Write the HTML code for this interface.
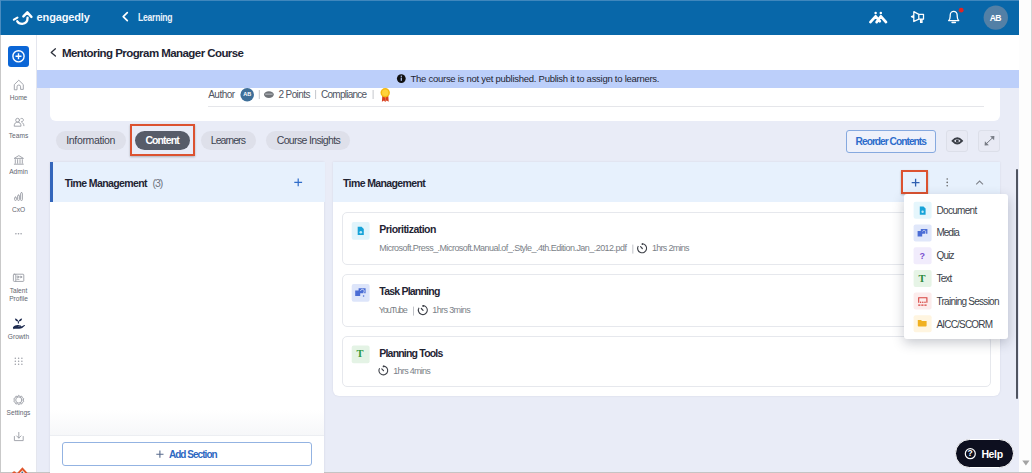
<!DOCTYPE html><html><head><meta charset="utf-8"><style>
*{margin:0;padding:0;box-sizing:border-box}
html,body{width:1032px;height:473px;overflow:hidden;background:#fff;font-family:"Liberation Sans",sans-serif}
.a{position:absolute}
.t{position:absolute;white-space:nowrap}
svg{position:absolute;overflow:visible}
</style></head><body><div class="a" style="left:37px;top:35px;width:982px;height:438px;background:#e9ecf7"></div>
<div class="a" style="left:0px;top:0px;width:1019px;height:35px;background:#0867a9"></div>
<div class="a" style="left:0px;top:0px;width:1019px;height:1px;background:#3f87bd"></div>
<div class="a" style="left:0px;top:35px;width:37px;height:438px;background:#fff;border-right:1px solid #e4e6ee"></div>
<div class="a" style="left:1019px;top:0px;width:13px;height:473px;background:#fdfdfd"></div>
<div class="a" style="left:1031px;top:0px;width:1px;height:473px;background:#d6d6d6"></div>
<div class="a" style="left:0px;top:35px;width:1px;height:438px;background:#c9c9c9"></div>
<div class="a" style="left:0px;top:0px;width:1px;height:35px;background:#4a8cc0"></div>
<div class="a" style="left:0px;top:472px;width:1032px;height:1px;background:#c4c4c4"></div>
<div class="a" style="left:37px;top:35px;width:982px;height:35px;background:#fff"></div>
<div class="a" style="left:50px;top:80px;width:950px;height:41px;background:#fff;border-radius:0 0 6px 6px"></div>
<div class="a" style="left:208px;top:106px;width:776px;height:1px;background:#e5e6ea"></div>
<div class="a" style="left:37px;top:70px;width:982px;height:17.5px;background:#bccffa"></div>
<svg width="1032" height="40" style="left:0;top:0" viewBox="0 0 1032 40">
<g fill="none" stroke="#fff" stroke-linecap="round" stroke-linejoin="round">
<path d="M13.9 19.6 L17.4 17.6" stroke-width="2.2"/>
<path d="M17.2 21.2 Q18.6 23.8 22.2 23.8 Q27.6 23.5 27.6 17.6" stroke-width="2.3"/>
<path d="M23.4 16.4 L27.3 12.4 L31.4 16.8" stroke-width="2.5"/>
<path d="M127.3 12.6 L123.2 16.6 L127.3 20.6" stroke-width="1.7"/>
<path d="M870.4 22.1 L875.6 16.3 L879.8 21.2 M876.6 22.1 L880.9 16.3 L886 22.1" stroke-width="2.7"/>
<path d="M913.8 11.7 V21.5 L918.8 19.2 V14.3 Z M918.8 14.3 H923.5 V19.2 H918.8 M920.6 19.2 V22.4 H922 V19.2 M913.8 15.6 L911.5 16.6 L913.8 17.6" stroke-width="1.3"/>
<path d="M948.6 20.6 h10.2 c-1.3-1.3 -1.6-2.6 -1.6-4.4 v-1 c0-2.2-1.6-3.9-3.5-3.9 s-3.5 1.7-3.5 3.9 v1 c0 1.8-0.3 3.1-1.6 4.4 z M952 22.5 h3.4" stroke-width="1.3"/>
</g>
<circle cx="875.6" cy="13.1" r="1.25" fill="#fff"/>
<circle cx="880.8" cy="13.1" r="1.25" fill="#fff"/>
<circle cx="961.2" cy="10.2" r="2.4" fill="#e02424"/>
<circle cx="995.8" cy="17.6" r="12.2" fill="#5380a6"/>
</svg>
<div class="t" style="left:36.60px;top:9.59px;font-size:11px;line-height:14px;letter-spacing:-0.138px;color:#f4f9ff;font-weight:700;">engagedly</div>
<div class="t" style="left:138px;top:10.56px;font-size:10.5px;line-height:13px;font-weight:700;color:#e8f1fb;letter-spacing:-0.3px;transform:scaleX(0.817);transform-origin:0 0">Learning</div>
<div class="t" style="left:989.80px;top:12.62px;font-size:8.6px;line-height:11px;letter-spacing:-0.822px;color:#fff;font-weight:700;">AB</div>
<svg width="20" height="20" style="left:45px;top:43px" viewBox="45 43 20 20"><path d="M55.4 48.8 L51.2 52.4 L55.4 56" fill="none" stroke="#2a2f3a" stroke-width="1.3" stroke-linecap="round" stroke-linejoin="round"/></svg>
<div class="t" style="left:62.00px;top:46.42px;font-size:11.5px;line-height:14px;letter-spacing:-0.560px;color:#1e2433;font-weight:700;">Mentoring Program Manager Course</div>
<svg width="12" height="12" style="left:396px;top:73px" viewBox="396 73 12 12"><circle cx="401.3" cy="78.6" r="4.4" fill="#111"/><rect x="400.7" y="77.6" width="1.2" height="3.2" fill="#bccffa"/><circle cx="401.3" cy="76.3" r="0.7" fill="#bccffa"/></svg>
<div class="t" style="left:410.50px;top:72.71px;font-size:9.5px;line-height:12px;letter-spacing:-0.264px;color:#1f2633;">The course is not yet published. Publish it to assign to learners.</div>
<div class="t" style="left:208.20px;top:88.83px;font-size:10px;line-height:12px;letter-spacing:-0.493px;color:#4f5461;">Author</div>
<svg width="200" height="20" style="left:236px;top:86px" viewBox="236 86 200 20">
<circle cx="247.2" cy="94.7" r="6.8" fill="#3e6f99"/>
<rect x="258.8" y="90" width="1" height="9" fill="#c5c7cc"/>
<ellipse cx="268.9" cy="94.6" rx="4.9" ry="3.3" fill="#707479"/>
<rect x="265.2" y="93.6" width="7.4" height="1.1" fill="#b5b8bd"/>
<rect x="315.1" y="90" width="1" height="9" fill="#c5c7cc"/>
<rect x="372.6" y="90" width="1" height="9" fill="#c5c7cc"/>
<path d="M382.3 95.5 L381.9 101.8 L384 100.4 L385.2 102 L385.2 96.5 Z M388.3 95.5 L388.7 101.8 L386.6 100.4 L385.4 102 L385.4 96.5 Z" fill="#d8401f"/>
<circle cx="385.2" cy="92.8" r="4.7" fill="#f5b912"/>
<circle cx="385.2" cy="92.8" r="3.2" fill="#ffd33b"/>
</svg>
<div class="t" style="left:243.20px;top:91.39px;font-size:5.5px;line-height:7px;letter-spacing:0.056px;color:#fff;font-weight:700;">AB</div>
<div class="t" style="left:278.40px;top:88.83px;font-size:10px;line-height:12px;letter-spacing:-0.591px;color:#4f5461;">2 Points</div>
<div class="t" style="left:321.10px;top:88.83px;font-size:10px;line-height:12px;letter-spacing:-0.756px;color:#4f5461;">Compliance</div>
<div class="a" style="left:56px;top:131px;width:69.5px;height:19.2px;background:#dee0ea;border-radius:10px"></div>
<div class="a" style="left:200.5px;top:131px;width:55.5px;height:19.2px;background:#dee0ea;border-radius:10px"></div>
<div class="a" style="left:265.7px;top:131px;width:84.6px;height:19.2px;background:#dee0ea;border-radius:10px"></div>
<div class="a" style="left:129.7px;top:124.3px;width:65.6px;height:31.4px;border:2px solid #dc5230;box-shadow:0 1px 2px rgba(0,0,0,0.25)"></div>
<div class="a" style="left:134.8px;top:131px;width:55.5px;height:19.2px;background:#575c69;border-radius:10px"></div>
<div class="t" style="left:66.30px;top:133.86px;font-size:10.5px;line-height:13px;letter-spacing:-0.353px;color:#3d4350;">Information</div>
<div class="t" style="left:145.40px;top:133.86px;font-size:10.5px;line-height:13px;letter-spacing:-0.893px;color:#fff;font-weight:700;">Content</div>
<div class="t" style="left:210.70px;top:133.86px;font-size:10.5px;line-height:13px;letter-spacing:-0.878px;color:#3d4350;">Learners</div>
<div class="t" style="left:276.70px;top:133.86px;font-size:10.5px;line-height:13px;letter-spacing:-0.640px;color:#3d4350;">Course Insights</div>
<div class="a" style="left:846.3px;top:129.6px;width:90.1px;height:23px;background:#eef1fb;border:1px solid #86a9df;border-radius:3px"></div>
<div class="t" style="left:855.60px;top:135.17px;font-size:10.2px;line-height:13px;letter-spacing:-0.983px;color:#2d6ccb;font-weight:700;">Reorder Contents</div>
<div class="a" style="left:945.6px;top:129.9px;width:22.6px;height:22.4px;background:#e8eaf4;border:1px solid #dcdfe9;border-radius:3px"></div>
<div class="a" style="left:978px;top:129.9px;width:22.4px;height:22.4px;background:#e8eaf4;border:1px solid #dcdfe9;border-radius:3px"></div>
<svg width="60" height="30" style="left:945px;top:128px" viewBox="945 128 60 30">
<path d="M952.6 140.9 Q957.3 135.6 962 140.9 Q957.3 146.2 952.6 140.9 Z" fill="none" stroke="#3a3e46" stroke-width="1.9"/>
<circle cx="957.3" cy="140.9" r="1.5" fill="#3a3e46"/>
<g stroke="#777b84" stroke-width="1" fill="none" stroke-linecap="round">
<path d="M985.6 144.4 L993.4 137"/></g><g fill="#777b84"><path d="M994.4 135.9 L994.1 140.2 L990.1 136.2 Z M984.6 145.5 L984.9 141.2 L988.9 145.2 Z"/>
</g>
</svg>
<div class="a" style="left:50px;top:162px;width:273.5px;height:311px;background:#fff;box-shadow:0 0 2px rgba(60,60,90,0.12)"></div>
<div class="a" style="left:50px;top:162px;width:274.6px;height:40px;background:#e7f1fd"></div>
<div class="a" style="left:50.4px;top:162px;width:2.2px;height:40px;background:#3366bb"></div>
<div class="t" style="left:64.70px;top:176.56px;font-size:10.5px;line-height:13px;letter-spacing:-0.615px;color:#1f2433;font-weight:700;">Time Management</div>
<div class="t" style="left:152.60px;top:176.56px;font-size:10.5px;line-height:13px;letter-spacing:-1.067px;color:#71757f;">(3)</div>
<svg width="12" height="12" style="left:292px;top:176px" viewBox="292 176 12 12"><path d="M298.2 178.4 V186.2 M294.3 182.3 H302.1" stroke="#2f6cc9" stroke-width="1.2" fill="none"/></svg>
<div class="a" style="left:50px;top:410px;width:273.5px;height:25.5px;background:linear-gradient(#fff,#f6f7f9)"></div>
<div class="a" style="left:50px;top:435.3px;width:273.5px;height:1px;background:#eceef2"></div>
<div class="a" style="left:62px;top:442.4px;width:250.2px;height:23.3px;background:#fff;border:1.3px solid #93b3e2;border-radius:3px"></div>
<svg width="12" height="12" style="left:154px;top:448px" viewBox="154 448 12 12"><path d="M159.9 450.6 V457.8 M156.3 454.2 H163.5" stroke="#56688a" stroke-width="1.1" fill="none"/></svg>
<div class="t" style="left:168.90px;top:448.54px;font-size:10px;line-height:12px;letter-spacing:-0.954px;color:#2d68c2;font-weight:700;">Add Section</div>
<div class="a" style="left:332.8px;top:162px;width:667.1px;height:233.6px;background:#fff;border-radius:0 0 6px 6px;box-shadow:0 0 2px rgba(60,60,90,0.12)"></div>
<div class="a" style="left:332.8px;top:162px;width:667.1px;height:40px;background:#e7f1fd"></div>
<div class="t" style="left:343.00px;top:176.56px;font-size:10.5px;line-height:13px;letter-spacing:-0.615px;color:#1f2433;font-weight:700;">Time Management</div>
<div class="a" style="left:900.7px;top:169.9px;width:27.4px;height:23.8px;border:2px solid #dc5230;box-shadow:0 1px 2px rgba(0,0,0,0.25)"></div>
<svg width="100" height="30" style="left:900px;top:168px" viewBox="900 168 100 30">
<path d="M915.6 178.8 V186.6 M911.7 182.7 H919.5" stroke="#2f5fb0" stroke-width="1.3" fill="none"/>
<circle cx="947.2" cy="179" r="0.8" fill="#666"/><circle cx="947.2" cy="182.4" r="0.8" fill="#666"/><circle cx="947.2" cy="185.8" r="0.8" fill="#666"/>
<path d="M976.2 184.3 L979.6 181 L983 184.3" stroke="#80848c" stroke-width="1.1" fill="none"/>
</svg>
<div class="a" style="left:342px;top:212px;width:649px;height:53px;background:#fff;border:1px solid #e6e8ed;border-radius:5px"></div>
<div class="t" style="left:379.30px;top:222.96px;font-size:10.5px;line-height:13px;letter-spacing:-0.552px;color:#1f2433;font-weight:700;">Prioritization</div>
<div class="a" style="left:342px;top:274px;width:649px;height:53px;background:#fff;border:1px solid #e6e8ed;border-radius:5px"></div>
<div class="t" style="left:379.30px;top:284.96px;font-size:10.5px;line-height:13px;letter-spacing:-0.784px;color:#1f2433;font-weight:700;">Task Planning</div>
<div class="a" style="left:342px;top:336px;width:649px;height:51px;background:#fff;border:1px solid #e6e8ed;border-radius:5px"></div>
<div class="t" style="left:379.30px;top:346.96px;font-size:10.5px;line-height:13px;letter-spacing:-0.805px;color:#1f2433;font-weight:700;">Planning Tools</div>
<div class="t" style="left:379.30px;top:243.38px;font-size:9px;line-height:11px;letter-spacing:-0.544px;color:#7b7f88;">Microsoft.Press_.Microsoft.Manual.of_.Style_.4th.Edition.Jan_.2012.pdf</div>
<div class="t" style="left:652.00px;top:243.38px;font-size:9px;line-height:11px;letter-spacing:-0.724px;color:#7b7f88;">1hrs 2mins</div>
<div class="t" style="left:378.80px;top:305.38px;font-size:9px;line-height:11px;letter-spacing:-1.061px;color:#7b7f88;">YouTube</div>
<div class="t" style="left:432.30px;top:305.38px;font-size:9px;line-height:11px;letter-spacing:-0.624px;color:#7b7f88;">1hrs 3mins</div>
<div class="t" style="left:393.30px;top:366.08px;font-size:9px;line-height:11px;letter-spacing:-0.724px;color:#7b7f88;">1hrs 4mins</div>
<svg width="700" height="200" style="left:340px;top:210px" viewBox="340 210 700 200">
<rect x="632.4" y="244.6" width="0.9" height="9" fill="#b9bcc2"/>
<rect x="413.1" y="306.6" width="0.9" height="9" fill="#b9bcc2"/>
<path d="M642.10 243.80 A4.5 4.5 0 1 1 638.28 245.92" stroke="#3d4048" stroke-width="1.1" fill="none"/><circle cx="642.40" cy="244.10" r="0.95" fill="#3d4048"/><path d="M642.30 248.50 L640.60 246.70" stroke="#3d4048" stroke-width="1.2" stroke-linecap="round"/>
<path d="M422.85 305.60 A4.5 4.5 0 1 1 419.03 307.72" stroke="#3d4048" stroke-width="1.1" fill="none"/><circle cx="423.15" cy="305.90" r="0.95" fill="#3d4048"/><path d="M423.05 310.30 L421.35 308.50" stroke="#3d4048" stroke-width="1.2" stroke-linecap="round"/>
<path d="M383.30 366.10 A4.4 4.4 0 1 1 379.57 368.17" stroke="#3d4048" stroke-width="1.1" fill="none"/><circle cx="383.60" cy="366.40" r="0.95" fill="#3d4048"/><path d="M383.50 370.70 L381.80 368.90" stroke="#3d4048" stroke-width="1.2" stroke-linecap="round"/>
<rect x="351.7" y="222" width="17.9" height="17.8" rx="2" fill="#e1f4fb"/>
<path d="M357.7 226.8 h3.9 l2.2 2.2 v6 h-6.1 z" fill="#17a3d8"/>
<circle cx="360.8" cy="232.2" r="1.3" fill="#bfeaf8"/>
<rect x="351.7" y="283.9" width="17.9" height="17.9" rx="2" fill="#dde5fa"/>
<path d="M355.2 290.5 h5 v5.6 h-5 z M358.6 288.2 h7 v5 h-7 z" fill="#4b6dd5"/>
<path d="M360.6 291 a1.8 1.8 0 1 1 3.2 1.2 v2.5" stroke="#dde5fa" stroke-width="0.9" fill="none"/>
<circle cx="363.6" cy="296" r="0.8" fill="#4b6dd5"/>
<rect x="351.7" y="345.6" width="17.9" height="17.6" rx="2" fill="#e4f3e5"/>
</svg>
<div class="t" style="left:356.5px;top:347.3px;font-family:'Liberation Serif',serif;font-weight:700;font-size:10.5px;line-height:13px;color:#2f9a3f">T</div>
<div class="a" style="left:904px;top:194.4px;width:104px;height:145px;background:#fff;border-radius:3px;box-shadow:0 4px 12px rgba(40,45,70,0.26)"></div>
<svg width="30" height="150" style="left:910px;top:198px" viewBox="910 198 30 150"><rect x="913.6" y="201.8" width="18" height="17" rx="2" fill="#e5f6fc"/><rect x="913.6" y="224.5" width="18" height="17" rx="2" fill="#e0e7fa"/><rect x="913.6" y="247.2" width="18" height="17" rx="2" fill="#f1ecfc"/><rect x="913.6" y="269.9" width="18" height="17" rx="2" fill="#e6f4e6"/><rect x="913.6" y="292.6" width="18" height="17" rx="2" fill="#fcecec"/><rect x="913.6" y="315.3" width="18" height="17" rx="2" fill="#fff5e0"/><path d="M919.8 206.4 h3.7 l2.1 2.1 v6.2 h-5.8 z" fill="#17a3d8"/><circle cx="922.6" cy="211.8" r="1.2" fill="#bfeaf8"/><path d="M917.6 231.1 h4.6 v5.4 h-4.6 z M920.8 228.9 h6.6 v4.8 h-6.6 z" fill="#4b6dd5"/><path d="M922.6 231.5 a1.6 1.6 0 1 1 3 1.1 v2.2" stroke="#dfe5f9" stroke-width="0.8" fill="none"/><path d="M918.7 302.8 V297.8 H926.9 V302.8" stroke="#d6433f" stroke-width="1.1" fill="none"/><path d="M918.2 305.1 H927.4" stroke="#d6433f" stroke-width="1.1" stroke-dasharray="2.2 0.9"/><circle cx="920.6" cy="302.20000000000005" r="0.8" fill="#d6433f"/><circle cx="922.8" cy="302.20000000000005" r="0.8" fill="#d6433f"/><circle cx="925" cy="302.20000000000005" r="0.8" fill="#d6433f"/><path d="M917.8 320.1 h3.2 l1 1 h4.6 v4.6 q0 0.8 -0.8 0.8 h-7.2 q-0.8 0 -0.8 -0.8 z" fill="#f0b020"/></svg>
<div class="t" style="left:919.60px;top:250.88px;font-size:9px;line-height:11px;letter-spacing:0.000px;color:#7a4fd0;font-weight:700;">?</div>
<div class="t" style="left:918.6px;top:271.5px;font-family:'Liberation Serif',serif;font-weight:700;font-size:10.5px;line-height:13px;color:#2a8a39">T</div>
<div class="t" style="left:936.50px;top:204.53px;font-size:10px;line-height:12px;letter-spacing:-0.697px;color:#3b3f4a;">Document</div>
<div class="t" style="left:936.50px;top:227.34px;font-size:10px;line-height:12px;letter-spacing:-1.009px;color:#3b3f4a;">Media</div>
<div class="t" style="left:936.50px;top:250.14px;font-size:10px;line-height:12px;letter-spacing:-0.854px;color:#3b3f4a;">Quiz</div>
<div class="t" style="left:936.50px;top:272.94px;font-size:10px;line-height:12px;letter-spacing:-0.847px;color:#3b3f4a;">Text</div>
<div class="t" style="left:936.50px;top:295.74px;font-size:10px;line-height:12px;letter-spacing:-0.741px;color:#3b3f4a;">Training Session</div>
<div class="t" style="left:936.50px;top:318.54px;font-size:10px;line-height:12px;letter-spacing:-0.821px;color:#3b3f4a;">AICC/SCORM</div>
<div class="a" style="left:954.6px;top:439.4px;width:59.6px;height:28.6px;background:#0d0f1f;border:1px solid #fff;border-radius:15px"></div>
<svg width="16" height="16" style="left:962px;top:446px" viewBox="962 446 16 16"><circle cx="970.3" cy="453.7" r="5" stroke="#fff" stroke-width="1.2" fill="none"/></svg>
<div class="t" style="left:967.60px;top:448.45px;font-size:8.5px;line-height:11px;letter-spacing:0.000px;color:#fff;font-weight:700;">?</div>
<div class="t" style="left:981.40px;top:447.86px;font-size:10.5px;line-height:13px;letter-spacing:-0.351px;color:#fff;font-weight:700;">Help</div>
<div class="a" style="left:1015.8px;top:168.6px;width:2.3px;height:230.5px;background:#4f5461;border-radius:1px"></div>
<svg width="12" height="10" style="left:1020px;top:458px" viewBox="1020 458 12 10"><path d="M1022.3 460.6 H1029.5 L1025.9 465.5 Z" fill="#a3a3a3"/></svg>
<div class="a" style="left:8px;top:45.6px;width:21px;height:21.3px;background:#0b66d6;border-radius:3px"></div>
<svg width="37" height="440" style="left:0;top:35px" viewBox="0 35 37 440">
<circle cx="18.5" cy="56.3" r="5.6" stroke="#fff" stroke-width="1.4" fill="none"/>
<path d="M18.5 53.3 V59.3 M15.5 56.3 H21.5" stroke="#fff" stroke-width="1.4"/>
<g stroke="#9a9da5" stroke-width="0.9" fill="none" stroke-linejoin="round" stroke-linecap="round">
<path d="M14.3 89.4 V84.6 L18.8 80.2 L23.3 84.6 V89.4 H20.6 V86.8 A1.8 1.8 0 0 0 17 86.8 V89.4 Z"/>
<circle cx="17.6" cy="120.2" r="1.9"/><path d="M14.2 125.8 c0-2.6 1.5-3.6 3.4-3.6 s3.4 1 3.4 3.6 z"/><path d="M20.8 118.6 a1.7 1.7 0 1 1 0.8 3.1 M22 122.6 c1.2 0.4 1.9 1.4 1.9 3.1"/>
<path d="M14.5 158.2 L18.8 155.6 L23.1 158.2 Z M15.3 159.6 V163.3 M17.6 159.6 V163.3 M20 159.6 V163.3 M22.3 159.6 V163.3 M14.3 164.2 H23.3"/>
<rect x="14.6" y="197" width="1.8" height="3.5" rx="0.9"/><rect x="17.6" y="195" width="1.8" height="5.5" rx="0.9"/><rect x="20.6" y="192.6" width="1.8" height="7.9" rx="0.9"/>
<rect x="13.4" y="274.2" width="10.4" height="7.2" rx="0.8"/><path d="M15.8 274.4 V281.2"/><circle cx="17.9" cy="276.9" r="0.9"/><path d="M16.7 279.6 c0.3-0.9 2.1-0.9 2.4 0"/><circle cx="20.9" cy="277" r="0.8"/>
<circle cx="18.8" cy="400" r="3.1"/><path d="M18.8 395.5 l1.3 1 1.6-0.3 0.6 1.5 1.4 0.9 -0.4 1.5 0.4 1.5 -1.4 0.9 -0.6 1.5 -1.6-0.3 -1.3 1 -1.3-1 -1.6 0.3 -0.6-1.5 -1.4-0.9 0.4-1.5 -0.4-1.5 1.4-0.9 0.6-1.5 1.6 0.3 z"/>
<path d="M14.4 436.5 V440.6 H23.2 V436.5 M18.8 432.4 V438 M16.6 435.9 L18.8 438.1 L21 435.9"/>
</g>
<g fill="#9a9da5"><circle cx="15.9" cy="233.8" r="0.8"/><circle cx="18.5" cy="233.8" r="0.8"/><circle cx="21.1" cy="233.8" r="0.8"/>
<circle cx="15.3" cy="358.2" r="0.75"/><circle cx="18.6" cy="358.2" r="0.75"/><circle cx="21.9" cy="358.2" r="0.75"/>
<circle cx="15.3" cy="361.2" r="0.75"/><circle cx="18.6" cy="361.2" r="0.75"/><circle cx="21.9" cy="361.2" r="0.75"/>
<circle cx="15.3" cy="364.2" r="0.75"/><circle cx="18.6" cy="364.2" r="0.75"/><circle cx="21.9" cy="364.2" r="0.75"/></g>
<g fill="#1d2a4f"><path d="M18.4 323.6 V321.2" stroke="#1d2a4f" stroke-width="1.1"/>
<path d="M18.4 321.6 c-0.4-1.8-1.6-2.8-3.5-3 c0.2 1.8 1.4 2.9 3.5 3 z M18.6 321.6 c0.4-1.8 1.6-2.8 3.5-3 c-0.2 1.8-1.4 2.9-3.5 3 z"/>
<path d="M12.9 327.2 c1.8-1.9 4-2.6 6.2-2 l1.6 0.4 c0.6 0.2 0.5 0.9-0.1 0.9 h-3 c1.5 0.3 3 0.2 4.4-0.3 l2.3-1.2 c0.5-0.2 0.9 0.3 0.5 0.7 l-2.6 2.3 c-0.9 0.6-1.9 0.8-3 0.8 h-4.6 l-1.2 0.5 z"/></g>
<path d="M17.2 473 L22.4 467.2 L27.6 473 Z" fill="#e0552b"/><path d="M19.8 473 L22.4 470.2 L25 473 Z" fill="#fff"/><circle cx="22.3" cy="472.6" r="1" fill="#4a6a8a"/><path d="M12 473 Q14.2 469.6 16.4 473 Z" fill="#e0552b"/>
</svg>
<div class="t" style="left:0;width:37px;text-align:center;top:94.41px;font-size:6.6px;line-height:8px;color:#62666f;">Home</div>
<div class="t" style="left:0;width:37px;text-align:center;top:131.51px;font-size:6.6px;line-height:8px;color:#62666f;">Teams</div>
<div class="t" style="left:0;width:37px;text-align:center;top:168.41px;font-size:6.6px;line-height:8px;color:#62666f;">Admin</div>
<div class="t" style="left:0;width:37px;text-align:center;top:205.91px;font-size:6.6px;line-height:8px;color:#62666f;">CxO</div>
<div class="t" style="left:0;width:37px;text-align:center;top:287.01px;font-size:6.6px;line-height:8px;color:#62666f;">Talent</div>
<div class="t" style="left:0;width:37px;text-align:center;top:295.11px;font-size:6.6px;line-height:8px;color:#62666f;">Profile</div>
<div class="t" style="left:0;width:37px;text-align:center;top:332.71px;font-size:6.6px;line-height:8px;color:#62666f;">Growth</div>
<div class="t" style="left:0;width:37px;text-align:center;top:409.21px;font-size:6.6px;line-height:8px;color:#62666f;">Settings</div></body></html>
